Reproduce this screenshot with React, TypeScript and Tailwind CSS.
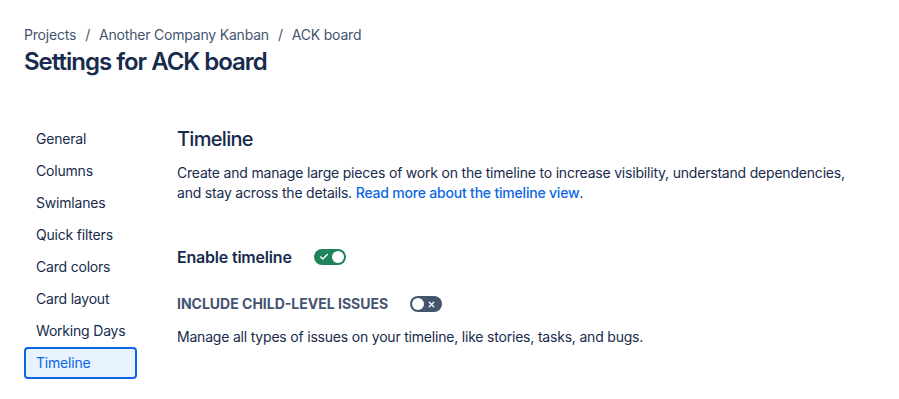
import { Check, X } from "lucide-react";

const navItems = [
  "General",
  "Columns",
  "Swimlanes",
  "Quick filters",
  "Card colors",
  "Card layout",
  "Working Days",
  "Timeline",
];

const Toggle = ({ on }: { on: boolean }) =>
  on ? (
    <div className="w-8 h-4 rounded-full bg-[#1f845a] flex items-center justify-between pl-[5px] pr-[2px]">
      <Check className="w-[10px] h-[10px] text-white" strokeWidth={3.5} />
      <div className="w-3 h-3 rounded-full bg-white" />
    </div>
  ) : (
    <div className="w-8 h-4 rounded-full bg-[#44546f] flex items-center justify-between pl-[2px] pr-[6px]">
      <div className="w-3 h-3 rounded-full bg-white" />
      <X className="w-[9px] h-[9px] text-white" strokeWidth={3.5} />
    </div>
  );

export default function App() {
  return (
    <div
      className="min-h-[399px] bg-white text-[#172b4d] px-6 pt-[25px] tracking-[-0.2px]"
      style={{ fontFamily: "Inter, 'Noto Sans', sans-serif" }}
    >
      {/* Header */}
      <div className="flex items-center gap-2 text-sm leading-5 text-[#44546f]">
        <span>Projects</span>
        <span className="px-[1px]">/</span>
        <span>Another Company Kanban</span>
        <span className="px-[1px]">/</span>
        <span>ACK board</span>
      </div>
      <h1 className="mt-[3px] text-2xl leading-7 font-semibold tracking-[-1px]">
        Settings for ACK board
      </h1>

      <div className="flex mt-[47px] gap-10">
        {/* Sidebar */}
        <nav className="w-[113px] shrink-0 flex flex-col">
          {navItems.map((item) => {
            const active = item === "Timeline";
            return (
              <div
                key={item}
                className={
                  active
                    ? "h-8 flex items-center pl-[10px] text-sm text-[#0c66e4] bg-[#e9f2ff] border-2 border-[#0c66e4] rounded"
                    : "h-8 flex items-center pl-3 text-sm"
                }
              >
                {item}
              </div>
            );
          })}
        </nav>

        {/* Content */}
        <div className="pt-1">
          <h2 className="text-xl leading-6 font-medium tracking-[-0.7px]">Timeline</h2>
          <p className="mt-3 text-sm leading-5 max-w-[685px]">
            Create and manage large pieces of work on the timeline to increase
            visibility, understand dependencies, and stay across the details.{" "}
            <span className="text-[#0c66e4] font-medium">
              Read more about the timeline view
            </span>
            .
          </p>

          <div className="mt-[42px] h-6 flex items-center gap-[22px]">
            <span className="text-base font-semibold">Enable timeline</span>
            <Toggle on />
          </div>

          <div className="mt-[23px] h-6 flex items-center gap-[22px]">
            <span className="text-sm font-bold uppercase text-[#44546f] tracking-normal">
              Include child-level issues
            </span>
            <Toggle on={false} />
          </div>

          <p className="mt-[11px] text-sm leading-5">
            Manage all types of issues on your timeline, like stories, tasks,
            and bugs.
          </p>
        </div>
      </div>
    </div>
  );
}
